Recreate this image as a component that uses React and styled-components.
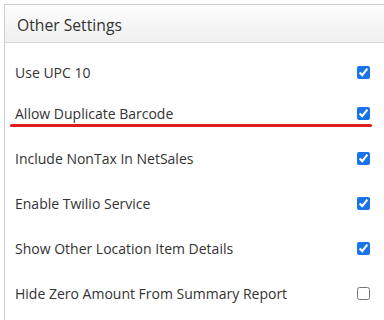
import React from 'react'
import styled, { createGlobalStyle } from 'styled-components'

const settings = [
  { label: 'Use UPC 10', checked: true },
  { label: 'Allow Duplicate Barcode', checked: true, marked: true },
  { label: 'Include NonTax In NetSales', checked: true },
  { label: 'Enable Twilio Service', checked: true },
  { label: 'Show Other Location Item Details', checked: true },
  { label: 'Hide Zero Amount From Summary Report', checked: false }
]

const App = () => (
  <>
    <GlobalStyle />
    <Panel>
      <PanelHeader>Other Settings</PanelHeader>
      <PanelBody>
        {settings.map((item, index) => (
          <Row key={item.label} first={index === 0}>
            <Label>{item.label}</Label>
            <Check type="checkbox" defaultChecked={item.checked} />
            {item.marked && <RedMark />}
          </Row>
        ))}
      </PanelBody>
    </Panel>
  </>
)

const GlobalStyle = createGlobalStyle`
  body {
    margin: 0;
    background: #fff;
    overflow: hidden;
    font-family: "Open Sans", "Liberation Sans", sans-serif;
  }
`
const Panel = styled.section`
  margin: 4px 0 0 4px;
  width: 390px;
  height: 330px;
  border-top: 1px solid #d0d0d0;
  border-left: 1px solid #d0d0d0;
  background: #fff;
`
const PanelHeader = styled.header`
  height: 38px;
  box-sizing: border-box;
  display: flex;
  align-items: center;
  padding: 3px 0 0 12px;
  font-size: 15.7px;
  color: #333;
  background: linear-gradient(to bottom, #fdfdfd, #efefef);
  border-bottom: 1px solid #d6d6d6;
`
const PanelBody = styled.div`
  padding-top: 11px;
`
const Row = styled.div`
  position: relative;
  height: ${props => (props.first ? '37px' : '45px')};
  display: flex;
  align-items: center;
  justify-content: space-between;
  padding: 0 25px 0 10px;
`
const Label = styled.span`
  font-size: 14px;
  color: #333;
`
const Check = styled.input`
  width: 13px;
  height: 13px;
  margin: 0;
  accent-color: #1a73e8;
`
const RedMark = styled.div`
  position: absolute;
  left: 5px;
  top: 33px;
  width: 362px;
  height: 3px;
  border-radius: 2px;
  background: #e01b22;
`

export default App
